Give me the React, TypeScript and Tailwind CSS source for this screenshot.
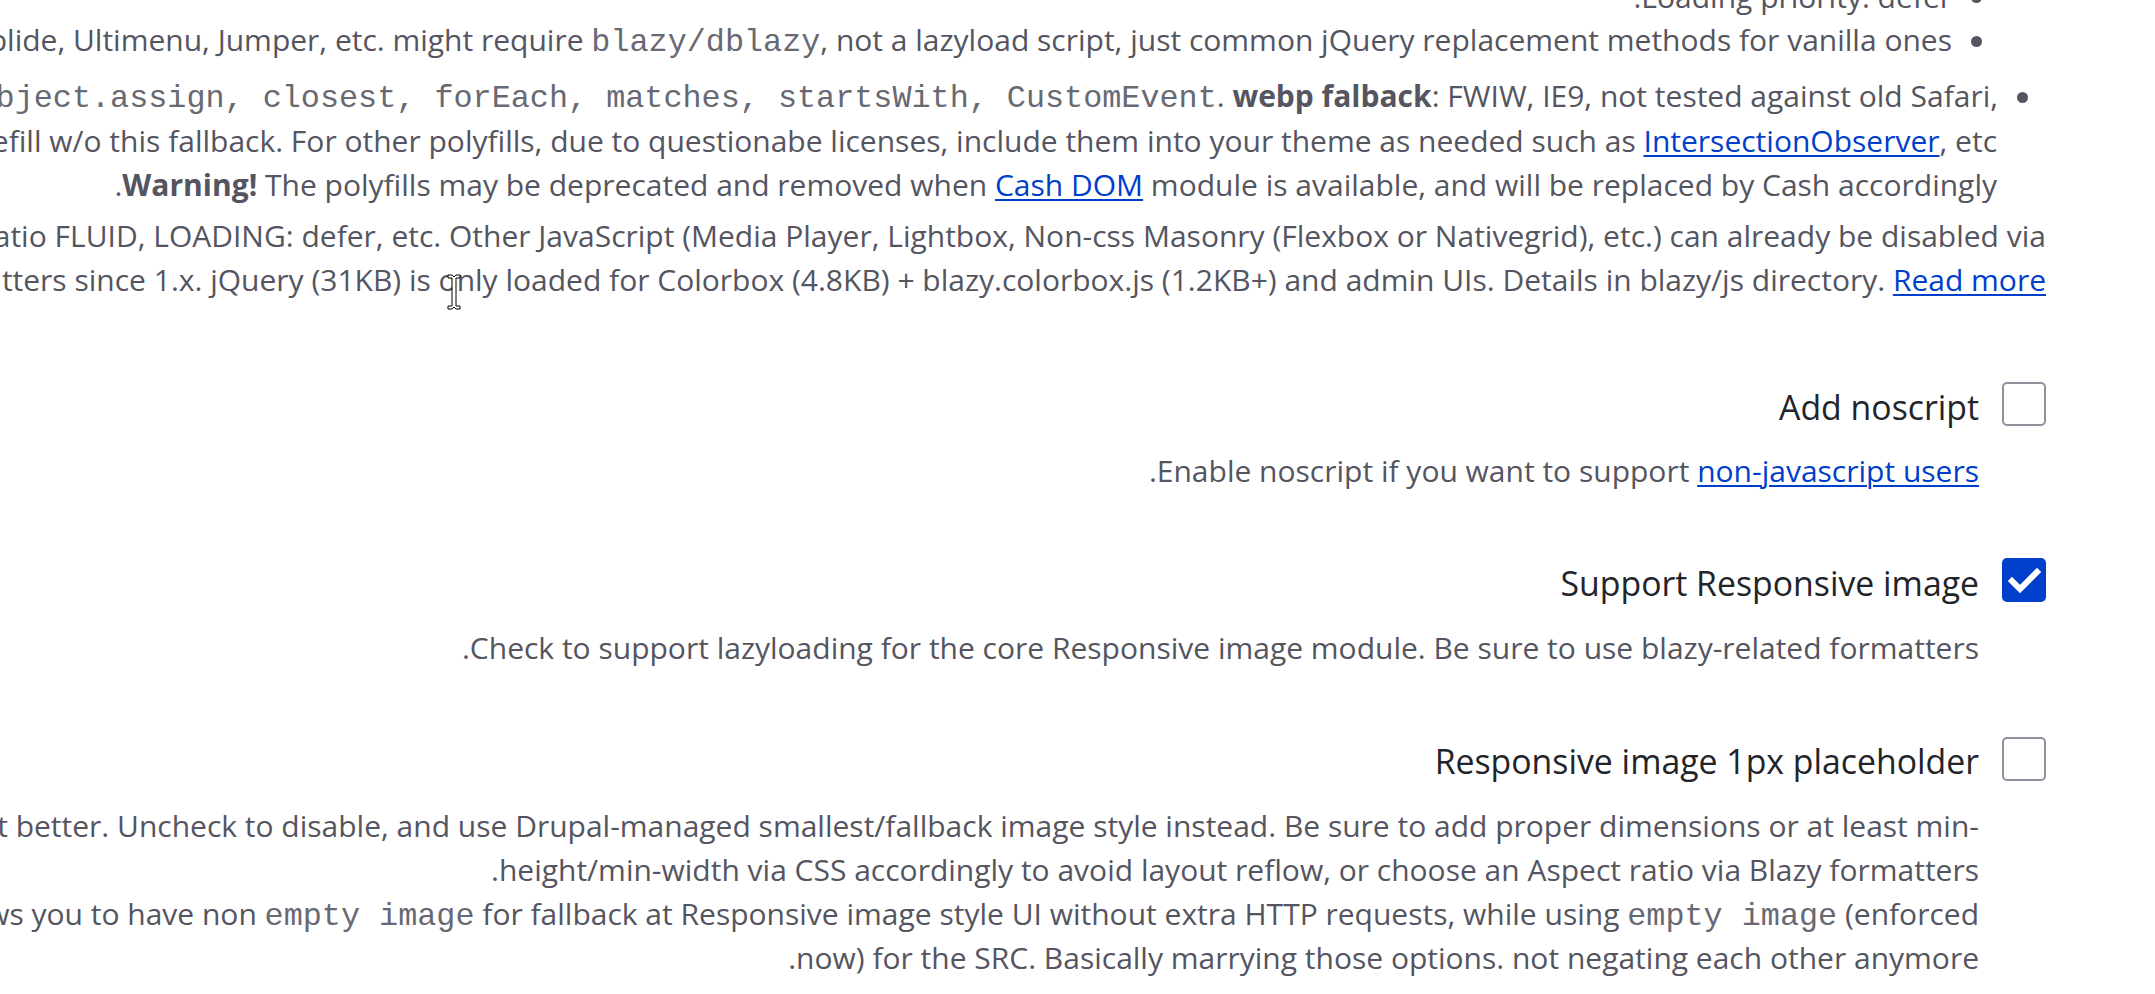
import React from "react";

const Bullet = () => (
  <span className="inline-block w-[11px] h-[11px] rounded-full bg-[#545560] shrink-0" />
);

const Code = ({ children }: { children: React.ReactNode }) => (
  <code className="font-['Liberation_Mono',monospace] text-[31.8px] text-[#686972]">{children}</code>
);

const A = ({ children }: { children: React.ReactNode }) => (
  <a className="text-[#003ecc] underline underline-offset-[3px] decoration-[2px]">{children}</a>
);

const Checkbox = ({ checked }: { checked?: boolean }) =>
  checked ? (
    <span className="w-[44px] h-[44px] shrink-0 rounded-[5px] bg-[#003ecc] flex items-center justify-center">
      <svg width="44" height="44" viewBox="0 0 44 44">
        <path d="M10 23 L18 31 L35 14" stroke="#fff" strokeWidth="6" fill="none" strokeLinecap="square" />
      </svg>
    </span>
  ) : (
    <span className="w-[44px] h-[44px] shrink-0 rounded-[5px] border-2 border-[#8e929c] bg-white" />
  );

export default function App() {
  return (
    <div
      dir="rtl"
      className="relative h-[994px] w-full overflow-hidden bg-white pr-[109px] font-['Open_Sans',sans-serif] text-[30px] text-[#545560]"
    >
      {/* top description */}
      <div className="-mt-[25px]">
        <div className="flex items-center gap-[19px] h-[44px] leading-[44px] whitespace-nowrap mr-[64px]">
          <Bullet />
          <span>Loading priority: defer.</span>
        </div>
        <div className="flex items-center gap-[19px] h-[44px] leading-[44px] whitespace-nowrap mr-[64px]">
          <Bullet />
          <span>
            Blazy sub-modules like Slick, Splide, Ultimenu, Jumper, etc. might require <Code>blazy/dblazy</Code>, not a lazyload script, just common jQuery replacement methods for vanilla ones.
          </span>
        </div>
        <div className="mt-[12px] flex items-center gap-[19px] h-[44px] leading-[44px] whitespace-nowrap mr-[18px]">
          <Bullet />
          <span dir="ltr">
            Included polyfills: <Code>Object.assign, closest, forEach, matches, startsWith, CustomEvent</Code>.{" "}
            <b className="font-bold">webp falback</b>: FWIW, IE9, not tested against old Safari,
          </span>
        </div>
        <div className="h-[44px] leading-[44px] whitespace-nowrap mr-[49px]">
          <span dir="ltr">
            but should be fine with modern browsers, and old ones may need Picturefill w/o this fallback. For other polyfills, due to questionabe licenses, include them into your theme as needed such as <A>IntersectionObserver</A>, etc
          </span>
        </div>
        <div className="h-[44px] leading-[44px] whitespace-nowrap mr-[49px]">
          <b className="font-bold">Warning!</b> The polyfills may be deprecated and removed when <A>Cash DOM</A> module is available, and will be replaced by Cash accordingly.
        </div>
        <div className="mt-[7px] h-[44px] leading-[44px] whitespace-nowrap">
          <span dir="ltr">
            Some options are already optimized by default, such as Aspect ratio FLUID, LOADING: defer, etc. Other JavaScript (Media Player, Lightbox, Non-css Masonry (Flexbox or Nativegrid), etc.) can already be disabled via
          </span>
        </div>
        <div className="h-[44px] leading-[44px] whitespace-nowrap">
          <span dir="ltr">
            their own settings at Blazy formatters since 1.x. jQuery (31KB) is only loaded for Colorbox (4.8KB) + blazy.colorbox.js (1.2KB+) and admin UIs. Details in blazy/js directory. <A>Read more</A>
          </span>
        </div>
      </div>

      {/* Add noscript */}
      <div className="mt-[80px] flex items-center gap-[23px] h-[44px]">
        <Checkbox />
        <label className="text-[33.8px] leading-[44px] text-[#232429] mt-[6px]">Add noscript</label>
      </div>
      <div className="mt-[23px] mr-[67px] h-[44px] leading-[44px] whitespace-nowrap">
        Enable noscript if you want to support <A>non-javascript users</A>.
      </div>

      {/* Support Responsive image */}
      <div className="mt-[65px] flex items-center gap-[23px] h-[44px]">
        <Checkbox checked />
        <label className="text-[33.8px] leading-[44px] text-[#232429] mt-[6px]">Support Responsive image</label>
      </div>
      <div className="mt-[24px] mr-[67px] h-[44px] leading-[44px] whitespace-nowrap">
        Check to support lazyloading for the core Responsive image module. Be sure to use blazy-related formatters.
      </div>

      {/* Responsive image 1px placeholder */}
      <div className="mt-[67px] flex items-center gap-[23px] h-[44px]">
        <Checkbox />
        <label className="text-[33.8px] leading-[44px] text-[#232429] mt-[4px]">Responsive image 1px placeholder</label>
      </div>
      <div className="mt-[23px] mr-[67px]">
        <div className="h-[44px] leading-[44px] whitespace-nowrap">
          <span dir="ltr">
            By default a 1px placeholder is used for the fallback, which works out better. Uncheck to disable, and use Drupal-managed smallest/fallback image style instead. Be sure to add proper dimensions or at least min-
          </span>
        </div>
        <div className="h-[44px] leading-[44px] whitespace-nowrap">
          height/min-width via CSS accordingly to avoid layout reflow, or choose an Aspect ratio via Blazy formatters.
        </div>
        <div className="h-[44px] leading-[44px] whitespace-nowrap">
          <span dir="ltr">
            This option allows you to have non <Code>empty image</Code> for fallback at Responsive image style UI without extra HTTP requests, while using <Code>empty image</Code> (enforced
          </span>
        </div>
        <div className="h-[44px] leading-[44px] whitespace-nowrap">
          now) for the SRC. Basically marrying those options. not negating each other anymore.
        </div>
      </div>

      {/* mouse I-beam cursor */}
      <svg className="absolute left-[446px] top-[274px]" width="16" height="36" viewBox="0 0 16 36">
        <path
          d="M2 1 H6 L8 3 L10 1 H14 V4 H10 V32 H14 V35 H10 L8 33 L6 35 H2 V32 H6 V4 H2 Z"
          fill="#fff"
          stroke="#000"
          strokeWidth="1"
        />
      </svg>
    </div>
  );
}
